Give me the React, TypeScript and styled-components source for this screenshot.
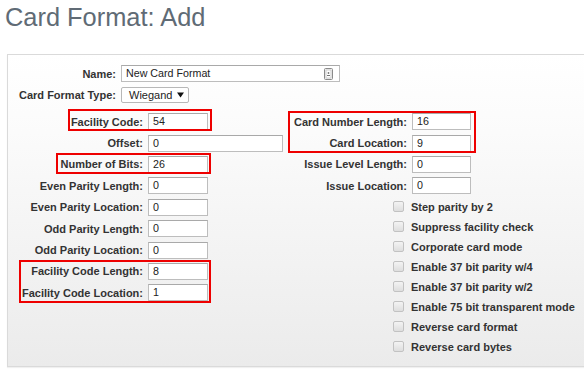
import styled, { createGlobalStyle } from "styled-components";

const GlobalStyle = createGlobalStyle`
    html, body {
        margin: 0;
        padding: 0;
        background: #ffffff;
        overflow: hidden;
    }
    body {
        font-family: "Liberation Sans", Arial, sans-serif;
        width: 584px;
        height: 371px;
    }
`

const leftRows = [
    { label: "Facility Code:", value: "54" },
    { label: "Offset:", value: "0", wide: true },
    { label: "Number of Bits:", value: "26" },
    { label: "Even Parity Length:", value: "0" },
    { label: "Even Parity Location:", value: "0" },
    { label: "Odd Parity Length:", value: "0" },
    { label: "Odd Parity Location:", value: "0" },
    { label: "Facility Code Length:", value: "8" },
    { label: "Facility Code Location:", value: "1" },
];

const rightRows = [
    { label: "Card Number Length:", value: "16" },
    { label: "Card Location:", value: "9" },
    { label: "Issue Level Length:", value: "0" },
    { label: "Issue Location:", value: "0" },
];

const checks = [
    "Step parity by 2",
    "Suppress facility check",
    "Corporate card mode",
    "Enable 37 bit parity w/4",
    "Enable 37 bit parity w/2",
    "Enable 75 bit transparent mode",
    "Reverse card format",
    "Reverse card bytes",
];

// red annotation boxes drawn over the form
const marks = [
    { left: 60, top: 54, width: 144, height: 22 },
    { left: 48, top: 98, width: 155, height: 21 },
    { left: 11, top: 205, width: 192, height: 43 },
    { left: 280, top: 56, width: 188, height: 42 },
];

export default function App() {
    return (
        <>
            <GlobalStyle />
            <Page>
                <Title>Card Format: Add</Title>
                <Panel>
                    <TopForm>
                        <Label>Name:</Label>
                        <TextBox $width={219}>
                            New Card Format
                            <FillIcon />
                        </TextBox>
                        <Label>Card Format Type:</Label>
                        <SelectBox>
                            Wiegand
                            <svg width="7" height="6" viewBox="0 0 7 6">
                                <path d="M0 0.5 H7 L3.5 5.5 Z" fill="#111" />
                            </svg>
                        </SelectBox>
                    </TopForm>
                    <Columns>
                        <FieldTable $labelWidth={135}>
                            {leftRows.map(r => (
                                <Row key={r.label}>
                                    <Label>{r.label}</Label>
                                    <TextBox $width={r.wide ? 135 : 60}>{r.value}</TextBox>
                                </Row>
                            ))}
                        </FieldTable>
                        <FieldTable $labelWidth={119}>
                            {rightRows.map(r => (
                                <Row key={r.label}>
                                    <Label>{r.label}</Label>
                                    <TextBox $width={59}>{r.value}</TextBox>
                                </Row>
                            ))}
                            {checks.map(c => (
                                <CheckRow key={c}>
                                    <CheckBox />
                                    <Label $left>{c}</Label>
                                </CheckRow>
                            ))}
                        </FieldTable>
                    </Columns>
                    {marks.map((m, i) => (
                        <Mark key={i} style={{ left: m.left, top: m.top, width: m.width, height: m.height }} />
                    ))}
                </Panel>
            </Page>
        </>
    )
}

function FillIcon() {
    return (
        <IconWrap>
            <svg width="9" height="12" viewBox="0 0 9 12">
                <rect x="0.5" y="0.5" width="8" height="11" rx="1" fill="#f4f4f4" stroke="#8a8a8a" />
                <rect x="2" y="2" width="5" height="8" fill="#fff" stroke="#c4c4c4" strokeWidth="0.8" />
                <circle cx="4.5" cy="5" r="0.9" fill="#777" />
                <rect x="3" y="7" width="3" height="1" fill="#777" />
            </svg>
        </IconWrap>
    )
}

const Page = styled.div`
    padding: 3px 0 0 0;
`

const Title = styled.h1`
    margin: 0 0 0 5px;
    font-family: "Liberation Sans", Arial, sans-serif;
    font-weight: normal;
    font-size: 25.4px;
    line-height: 29px;
    color: #606b75;
`

const Panel = styled.div`
    position: relative;
    margin: 22px 0 0 7px;
    width: 577px;
    height: 313px;
    box-sizing: border-box;
    border: 1px solid #dadada;
    border-right: none;
    background: linear-gradient(to bottom, #ffffff 0%, #fbfbfb 25%, #ebebeb 100%);
    box-shadow: 0 1px 1px rgba(0, 0, 0, 0.06);
`

const TopForm = styled.div`
    display: grid;
    grid-template-columns: 108px auto;
    grid-auto-rows: 21.5px;
    column-gap: 5px;
    align-items: center;
    justify-content: start;
    padding-top: 8px;
`

const Columns = styled.div`
    display: flex;
    margin-top: 5px;
`

const FieldTable = styled.div<{ $labelWidth: number }>`
    display: grid;
    grid-template-columns: ${p => p.$labelWidth}px auto;
    column-gap: 5px;
    align-content: start;
    &:first-child {
        width: 280px;
    }
`

const Row = styled.div`
    display: contents;
    & > * {
        height: 21.4px;
    }
`

const CheckRow = styled.div`
    display: contents;
    & > * {
        height: 20px;
    }
    &:first-of-type > * {
        margin-top: -1px;
    }
`

const Label = styled.div<{ $left?: boolean }>`
    display: flex;
    align-items: center;
    justify-content: ${p => p.$left ? "flex-start" : "flex-end"};
    margin-left: ${p => p.$left ? "-1px" : "0"};
    font-size: 11px;
    font-weight: bold;
    color: #333333;
    white-space: nowrap;
`

const TextBox = styled.div<{ $width: number }>`
    position: relative;
    align-self: center;
    box-sizing: border-box;
    width: ${p => p.$width}px;
    height: 17px !important;
    padding-left: 4px;
    border: 1px solid #bdbdbd;
    border-top-color: #a9a9a9;
    background: #ffffff;
    font-size: 10.7px;
    line-height: 15px;
    color: #222222;
    white-space: nowrap;
`

const IconWrap = styled.span`
    position: absolute;
    right: 6px;
    top: 2px;
    line-height: 0;
`

const SelectBox = styled.div`
    display: flex;
    align-items: center;
    justify-content: space-between;
    box-sizing: border-box;
    width: 68px;
    height: 16px;
    padding: 0 4px 0 7px;
    border: 1px solid #b8b8b8;
    border-radius: 2px;
    background: #ffffff;
    font-size: 11px;
    color: #222222;
`

const CheckBox = styled.span`
    justify-self: end;
    align-self: center;
    box-sizing: border-box;
    width: 11px;
    height: 11px !important;
    margin-right: 3px;
    border: 1px solid #c2c2c2;
    border-radius: 2px;
    background: linear-gradient(to bottom, #f3f3f3, #dedede);
`

const Mark = styled.div`
    position: absolute;
    box-sizing: border-box;
    border: 2px solid #ee0000;
    pointer-events: none;
`
